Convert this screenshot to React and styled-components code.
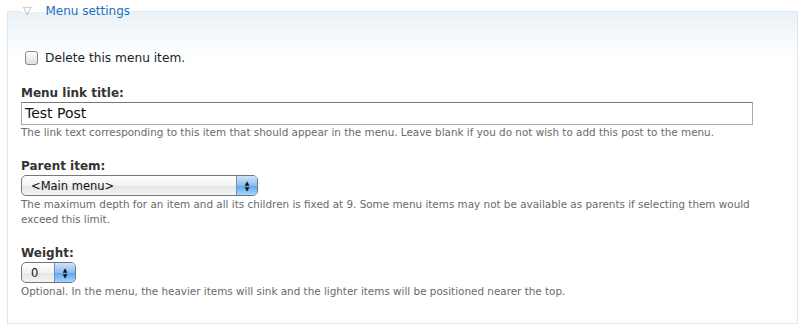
import styled, { createGlobalStyle } from 'styled-components';

const GlobalStyle = createGlobalStyle`
    html, body {
        margin: 0;
        padding: 0;
        background: #fff;
    }
    body {
        font-family: 'DejaVu Sans', Verdana, sans-serif;
        color: #333;
    }
`;

const Page = styled.div`
    width: 804px;
    height: 330px;
    padding: 4px 6px 0 7px;
    box-sizing: border-box;
`;

const Fieldset = styled.fieldset`
    margin: 0;
    padding: 33px 8px 0 13px;
    height: 320px;
    box-sizing: border-box;
    border: 1px solid #dfe6ed;
    background: linear-gradient(to bottom, #e9f1f7 0px, #f8fbfd 30px, #fff 50px);
`;

const Legend = styled.legend`
    display: flex;
    align-items: center;
    gap: 14px;
    margin-left: 0;
    padding: 0 2px;
    font-size: 12px;
    color: #1a6fbf;
    line-height: 14px;
`;

const Triangle = styled.span`
    font-size: 11px;
    color: #b0b0b0;
`;

const CheckRow = styled.label`
    display: flex;
    align-items: center;
    gap: 7px;
    margin: 0 0 0 4px;
    font-size: 12.2px;
    color: #222;
`;

const Box = styled.span`
    width: 11px;
    height: 12px;
    border: 1px solid #888;
    border-radius: 3px;
    background: linear-gradient(#fff, #ddd);
`;

const Field = styled.div`
    margin-top: ${(p) => p.top}px;
`;

const Label = styled.div`
    font-size: 12px;
    font-weight: bold;
    color: #333;
    line-height: 15px;
    margin-bottom: 1px;
`;

const TextInput = styled.div`
    width: 732px;
    height: 23px;
    box-sizing: border-box;
    border: 1px solid #aaa;
    border-top-color: #777;
    padding: 2px 3px;
    font-size: 14px;
    color: #111;
`;

const Select = styled.div`
    width: ${(p) => p.width}px;
    height: 21px;
    box-sizing: border-box;
    display: flex;
    border: 1px solid #777;
    border-radius: 5px;
    overflow: hidden;
    background: linear-gradient(#fff, #f2f2f2 50%, #e4e4e4 51%, #f4f4f4);
    font-size: 11.5px;
    color: #111;
`;

const SelectText = styled.div`
    flex: 1;
    padding: 3px 0 0 ${(p) => p.pad}px;
`;

const Arrows = styled.div`
    width: 20px;
    display: flex;
    flex-direction: column;
    align-items: center;
    justify-content: center;
    border-left: 1px solid #6a8ec0;
    background: linear-gradient(#cde4fb, #8dbdf0 50%, #5ea3ec 51%, #a6d6ff);
    font-size: 6px;
    line-height: 6px;
    color: #111;
`;

const Description = styled.div`
    margin-top: ${(p) => p.gap || 0}px;
    font-size: 10.4px;
    line-height: 15px;
    color: #6a6a6a;
`;

function AquaSelect({ width, pad, value }) {
    return (
        <Select width={width}>
            <SelectText pad={pad}>{value}</SelectText>
            <Arrows>
                <span>▲</span>
                <span>▼</span>
            </Arrows>
        </Select>
    );
}

function App() {
    return (
        <Page>
            <GlobalStyle />
            <Fieldset>
                <Legend>
                    <Triangle>▽</Triangle>
                    Menu settings
                </Legend>
                <CheckRow>
                    <Box />
                    Delete this menu item.
                </CheckRow>
                <Field top={21}>
                    <Label>Menu link title:</Label>
                    <TextInput>Test Post</TextInput>
                    <Description>
                        The link text corresponding to this item that should appear in the menu. Leave blank if you do not wish to add this post to the menu.
                    </Description>
                </Field>
                <Field top={19}>
                    <Label>Parent item:</Label>
                    <AquaSelect width={237} pad={9} value="<Main menu>" />
                    <Description gap={1}>
                        The maximum depth for an item and all its children is fixed at 9. Some menu items may not be available as parents if selecting them would exceed this limit.
                    </Description>
                </Field>
                <Field top={19}>
                    <Label>Weight:</Label>
                    <AquaSelect width={55} pad={9} value="0" />
                    <Description gap={1}>
                        Optional. In the menu, the heavier items will sink and the lighter items will be positioned nearer the top.
                    </Description>
                </Field>
            </Fieldset>
        </Page>
    );
}

export default App;
